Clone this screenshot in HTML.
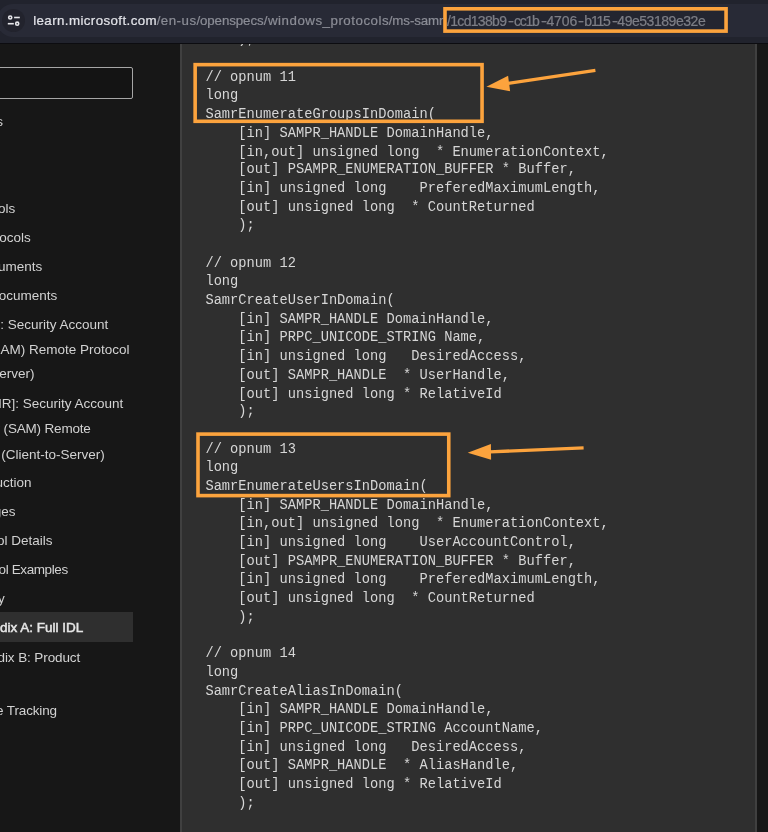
<!DOCTYPE html>
<html lang="en">
<head>
<meta charset="utf-8">
<title>[MS-SAMR]: Appendix A: Full IDL | Microsoft Learn</title>
<style>
html,body{margin:0;padding:0;}
body{width:768px;height:832px;overflow:hidden;position:relative;background:#171717;font-family:"Liberation Sans",sans-serif;}
#bar{position:absolute;left:0;top:0;width:768px;height:43px;background:#21232d;border-bottom:1px solid #0c0c10;}
#pill{position:absolute;left:-3px;top:3.7px;width:780px;height:33.5px;background:#282a36;border-radius:16px 0 0 16px;}
#ico{position:absolute;left:2.4px;top:8.9px;width:23px;height:23px;border-radius:12px;background:#22232d;}
#url{position:absolute;left:0;top:11px;transform:translateY(0.45px);-webkit-text-stroke:0.22px;width:768px;height:20px;line-height:20px;font-size:13.3px;white-space:nowrap;color:#8b8d96;will-change:transform;}
#url span{position:absolute;top:0;}
#url .d{color:#e2e3e8;}
#url .n{font-size:14px;}
#url .h{transform:scaleX(1.35);transform-origin:0 50%;}
#side{position:absolute;left:0;top:44px;width:180px;height:788px;background:#171717;overflow:hidden;}
#search{position:absolute;left:-10px;top:23.4px;width:143px;height:31.5px;border:1.3px solid #a6a6a6;border-radius:2px;box-sizing:border-box;background:#141414;}
.ti{position:absolute;white-space:nowrap;font-size:13.5px;line-height:20px;color:#d2d2d2;letter-spacing:0;will-change:transform;}
.ti.b{font-weight:normal;-webkit-text-stroke:0.5px;letter-spacing:0;color:#e6e6e6;}
#sel{position:absolute;left:0;top:568.2px;width:133px;height:29.4px;background:#2f2f2f;}
#code{position:absolute;left:180px;top:44px;width:577px;height:788px;box-sizing:border-box;border-left:2px solid #404040;border-right:2px solid #404040;background:#2f2f2f;overflow:hidden;}
pre{position:absolute;left:24px;top:-13px;transform-origin:0 0;transform:translate(-0.6px,0.2px) scaleY(1.1);margin:0;font-family:"Liberation Mono",monospace;font-size:13.72px;line-height:16.918px;color:#d6d6d6;will-change:transform;}
svg{position:absolute;left:0;top:0;}
</style>
</head>
<body>
<div id="bar">
  <div id="pill"></div>
  <div id="ico"></div>
  <svg id="tune" width="28" height="40" viewBox="0 0 28 40" fill="none" stroke="#e6e6ea" stroke-width="1.6"><circle cx="10.2" cy="17.5" r="1.55"/><line x1="14.1" y1="17.5" x2="19.8" y2="17.5"/><line x1="7.8" y1="23.7" x2="13.8" y2="23.7"/><circle cx="17.2" cy="23.7" r="1.55"/></svg>
  <div id="url"><span class="d" style="left:33.20px;letter-spacing:0.411px">learn.microsoft.com</span><span style="left:156.70px;letter-spacing:0.480px">/en-us</span><span style="left:196.40px;letter-spacing:-0.089px">/openspecs</span><span style="left:263.75px;letter-spacing:0.518px">/windows_protocols</span><span style="left:388.75px;letter-spacing:-0.086px">/ms-samr</span><span class="n" style="left:447.00px;letter-spacing:-0.675px">/1cd138b9</span><span class="h" style="left:508.10px">-</span><span class="n" style="left:514.10px;letter-spacing:-1.267px">cc1b</span><span class="h" style="left:540.50px">-</span><span class="n" style="left:546.40px;letter-spacing:-0.067px">4706</span><span class="h" style="left:578.30px">-</span><span class="n" style="left:584.30px;letter-spacing:-1.200px">b115</span><span class="h" style="left:611.90px">-</span><span class="n" style="left:617.30px;letter-spacing:-0.455px">49e53189e32e</span></div>
</div>
<div id="side">
  <div id="search"></div>
  <div id="sel"></div>
  <div class="ti" style="right:177.20px;top:67.79px">Open Specifications</div>
  <div class="ti" style="right:164.80px;top:154.79px">Protocols</div>
  <div class="ti" style="right:149.25px;top:183.79px">Windows Protocols</div>
  <div class="ti" style="right:138.00px;top:212.79px">Overview Documents</div>
  <div class="ti" style="right:122.25px;top:241.79px">Technical Documents</div>
  <div class="ti" style="right:71.75px;top:270.79px">[MS-SAMR]: Security Account</div>
  <div class="ti" style="right:50.25px;top:295.79px">Manager (SAM) Remote Protocol</div>
  <div class="ti" style="right:145.75px;top:319.79px">(Client-to-Server)</div>
  <div class="ti" style="right:56.25px;top:349.79px">[MS-SAMR]: Security Account</div>
  <div class="ti" style="right:89.50px;top:374.79px;letter-spacing:-0.18px">Manager (SAM) Remote</div>
  <div class="ti" style="right:75.25px;top:400.79px">Protocol (Client-to-Server)</div>
  <div class="ti" style="right:148.25px;top:428.79px">Introduction</div>
  <div class="ti" style="right:164.00px;top:457.79px">Messages</div>
  <div class="ti" style="right:127.50px;top:486.79px">Protocol Details</div>
  <div class="ti" style="right:112.00px;top:515.79px;letter-spacing:-0.4px">Protocol Examples</div>
  <div class="ti" style="right:175.50px;top:544.79px">Security</div>
  <div class="ti b" style="right:96.75px;top:573.79px">Appendix A: Full IDL</div>
  <div class="ti" style="right:99.50px;top:603.79px;letter-spacing:-0.1px">Appendix B: Product</div>
  <div class="ti" style="right:123.00px;top:656.79px;letter-spacing:-0.14px">Change Tracking</div>
</div>
<div id="code"><pre>    );

// opnum 11
long
SamrEnumerateGroupsInDomain(
    [in] SAMPR_HANDLE DomainHandle,
    [in,out] unsigned long  * EnumerationContext,
    [out] PSAMPR_ENUMERATION_BUFFER * Buffer,
    [in] unsigned long    PreferedMaximumLength,
    [out] unsigned long  * CountReturned
    );

// opnum 12
long
SamrCreateUserInDomain(
    [in] SAMPR_HANDLE DomainHandle,
    [in] PRPC_UNICODE_STRING Name,
    [in] unsigned long   DesiredAccess,
    [out] SAMPR_HANDLE  * UserHandle,
    [out] unsigned long * RelativeId
    );

// opnum 13
long
SamrEnumerateUsersInDomain(
    [in] SAMPR_HANDLE DomainHandle,
    [in,out] unsigned long  * EnumerationContext,
    [in] unsigned long    UserAccountControl,
    [out] PSAMPR_ENUMERATION_BUFFER * Buffer,
    [in] unsigned long    PreferedMaximumLength,
    [out] unsigned long  * CountReturned
    );

// opnum 14
long
SamrCreateAliasInDomain(
    [in] SAMPR_HANDLE DomainHandle,
    [in] PRPC_UNICODE_STRING AccountName,
    [in] unsigned long   DesiredAccess,
    [out] SAMPR_HANDLE  * AliasHandle,
    [out] unsigned long * RelativeId
    );
</pre></div>
<svg width="768" height="832" viewBox="0 0 768 832" fill="none" stroke="#fca33d" stroke-width="3.6">
  <rect x="445" y="8.8" width="281.06" height="22.3" fill="rgba(0,0,0,0.1)"/>
  <rect x="195.15" y="64.65" width="286.9" height="56.65"/>
  <rect x="198" y="434.1" width="250.76" height="61.5"/>
  <g stroke-width="3.3">
    <line x1="595.4" y1="70.4" x2="508" y2="83.45"/>
    <line x1="583.6" y1="447.85" x2="490" y2="451.85"/>
  </g>
  <g fill="#fca33d" stroke="none">
    <polygon points="486.4,86.8 508.1,75.7 510.1,91.2"/>
    <polygon points="467.7,452.7 490.9,443.9 491.1,459.7"/>
  </g>
</svg>
</body>
</html>
